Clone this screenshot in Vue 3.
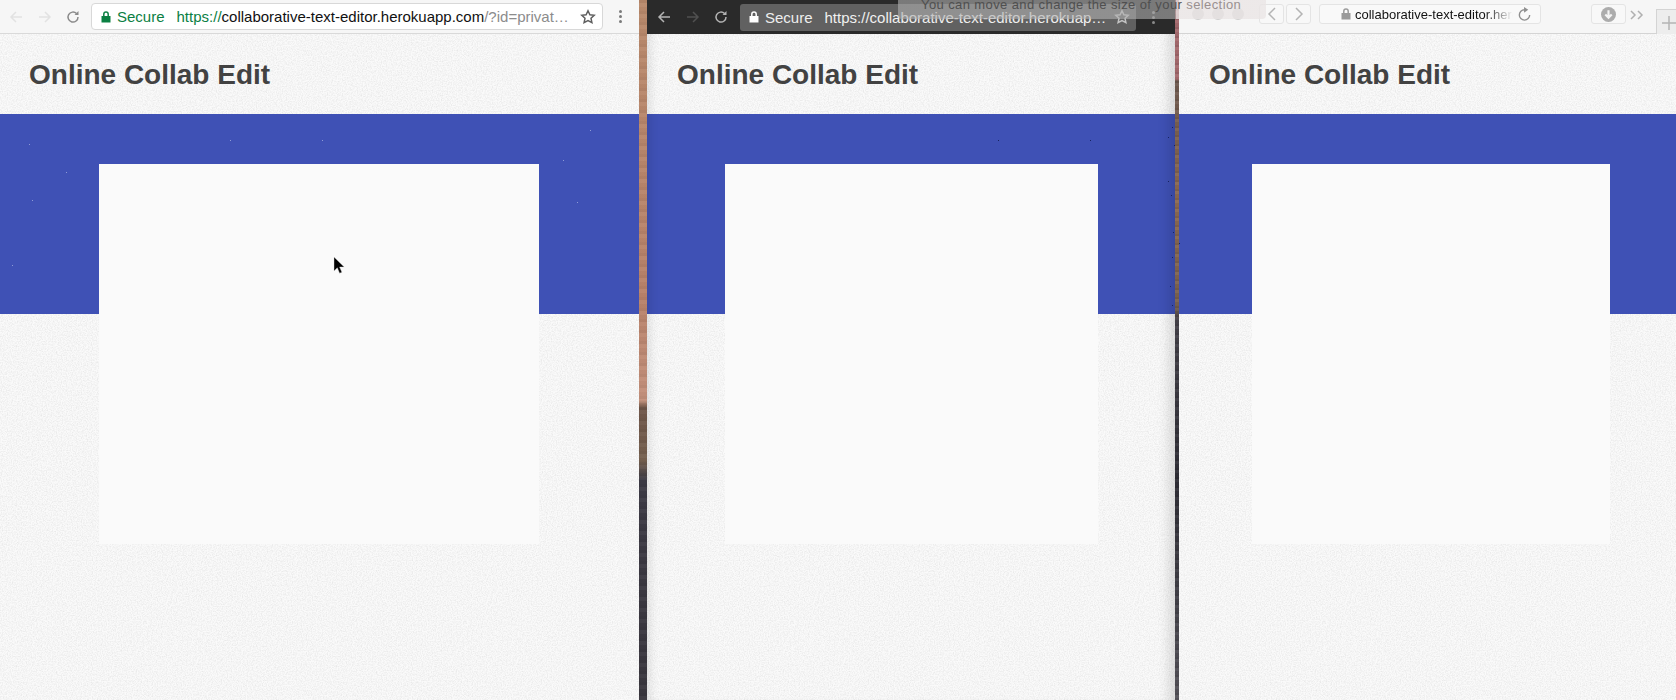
<template>
  <div class="screen">
    <!-- ventana 1: chrome claro -->
    <section class="win win-one">
      <header class="bar bar-light">
        <div class="nav">
          <svg width="16" height="16" viewBox="0 0 16 16" class="dim"><path d="M14 8H3M8 3L3 8l5 5" /></svg>
          <svg width="16" height="16" viewBox="0 0 16 16" class="dim"><path d="M2 8h11M8 3l5 5-5 5" /></svg>
          <svg width="16" height="16" viewBox="0 0 16 16" class="reload"><path d="M13 8a5 5 0 1 1-1.500-3.500" /><path class="solid" d="M13.500 2v4h-4z" /></svg>
        </div>
        <div class="url url-light">
          <svg width="10" height="12" viewBox="0 0 10 12" class="lock green"><path class="solid" d="M0.500 5h9v6.500h-9z" /><path d="M2.800 5V3.300a2.200 2.200 0 0 1 4.400 0V5" /></svg>
          <span class="secure first">Secure</span>
          <span class="addr"><span class="secure">https://</span>collaborative-text-editor.herokuapp.com<span class="muted">/?id=privat…</span></span>
          <svg width="16" height="16" viewBox="0 0 16 16" class="star"><path d="M8 1.800l1.900 4 4.300.5-3.200 3 .9 4.300L8 11.500l-3.900 2.100.9-4.300-3.200-3 4.300-.5z" /></svg>
        </div>
        <div class="dots"><i></i><i></i><i></i></div>
      </header>
      <PageBody />
    </section>

    <div class="strip strip-a"></div>

    <!-- ventana 2: chrome oscuro -->
    <section class="win win-two">
      <header class="bar bar-dark">
        <div class="nav">
          <svg width="16" height="16" viewBox="0 0 16 16" class="light"><path d="M14 8H3M8 3L3 8l5 5" /></svg>
          <svg width="16" height="16" viewBox="0 0 16 16" class="darkdim"><path d="M2 8h11M8 3l5 5-5 5" /></svg>
          <svg width="16" height="16" viewBox="0 0 16 16" class="light"><path d="M13 8a5 5 0 1 1-1.500-3.500" /><path class="solid" d="M13.500 2v4h-4z" /></svg>
        </div>
        <div class="url url-dark">
          <svg width="10" height="12" viewBox="0 0 10 12" class="lock white"><path class="solid" d="M0.500 5h9v6.500h-9z" /><path d="M2.800 5V3.300a2.200 2.200 0 0 1 4.400 0V5" /></svg>
          <span class="secure-dark">Secure</span>
          <span class="addr addr-dark">https://collaborative-text-editor.herokuap…</span>
          <svg width="16" height="16" viewBox="0 0 16 16" class="star star-dark"><path d="M8 1.800l1.900 4 4.300.5-3.200 3 .9 4.300L8 11.500l-3.900 2.100.9-4.300-3.200-3 4.300-.5z" /></svg>
        </div>
        <div class="dots dots-dark"><i></i><i></i><i></i></div>
      </header>
      <PageBody />
    </section>

    <div class="strip strip-b"></div>

    <!-- ventana 3: safari -->
    <section class="win win-three">
      <header class="bar bar-safari">
        <div class="lights"><i></i><i></i><i></i></div>
        <div class="saf-btns">
          <span class="saf-btn"><svg width="10" height="14" viewBox="0 0 10 14" class="saf-ico"><path d="M8 1L2 7l6 6" /></svg></span>
          <span class="saf-btn"><svg width="10" height="14" viewBox="0 0 10 14" class="saf-ico"><path d="M2 1l6 6-6 6" /></svg></span>
        </div>
        <div class="saf-url">
          <svg width="10" height="12" viewBox="0 0 10 12" class="lock gray"><path class="solid" d="M0.500 5h9v6.500h-9z" /><path d="M2.800 5V3.300a2.200 2.200 0 0 1 4.400 0V5" /></svg>
          <span class="saf-text">collaborative-text-editor.herokuapp.com</span>
          <svg width="15" height="15" viewBox="0 0 16 16" class="saf-reload"><path d="M13.500 8.500a5.500 5.500 0 1 1-5.500-5.500" /><path class="solid" d="M7.500 0l4.500 3-4.500 3z" /></svg>
        </div>
        <span class="saf-btn saf-down">
          <svg width="15" height="15" viewBox="0 0 14 14"><circle cx="7" cy="7" r="7" fill="#acacac" /><path class="arrow" d="M7 3v7M4 7l3 3 3-3" /></svg>
        </span>
        <svg width="14" height="10" viewBox="0 0 14 10" class="more"><path d="M1 1l4 4-4 4M8 1l4 4-4 4" /></svg>
        <div class="tab-plus">
          <svg width="14" height="14" viewBox="0 0 14 14" class="saf-ico"><path d="M7 0v14M0 7h14" /></svg>
        </div>
      </header>
      <PageBody />
    </section>

    <!-- aviso de la herramienta de captura -->
    <div class="hint">You can move and change the size of your <span class="hint-light">selection</span></div>

    <!-- motas del gif y cursor -->
    <svg class="overlay" width="1676" height="700" viewBox="0 0 1676 700">
      <rect v-for="s in specks" :key="s.x + '-' + s.y" :x="s.x" :y="s.y" width="1" height="1" :fill="s.c" />
      <path d="M334 257v14l3.300-3.200 2.300 5.400 2.300-1-2.300-5.200h4.600z" fill="#000" stroke="#d8d8d8" stroke-width=".4" />
    </svg>
  </div>
</template>

<script setup>
import { h } from 'vue'

const NOISE_ID = 'page-noise'

// las tres ventanas muestran la misma pagina
const PageBody = () =>
  h('div', { class: 'page' }, [
    h('svg', { class: 'grain', width: '100%', height: '100%' }, [
      h('filter', { id: NOISE_ID, 'color-interpolation-filters': 'sRGB' }, [
        h('feTurbulence', { type: 'fractalNoise', baseFrequency: '0.8', numOctaves: '2', seed: '4' }),
        h('feColorMatrix', { values: '0 0 0 0 0  0 0 0 0 0  0 0 0 0 0  0.14 0 0 0 -0.05' }),
      ]),
      h('rect', { width: '100%', height: '100%', filter: `url(#${NOISE_ID})` }),
    ]),
    h('div', { class: 'title-row' }, h('h1', { class: 'title' }, 'Online Collab Edit')),
    h('div', { class: 'stage' }, h('div', { class: 'card' })),
  ])

const lightSpeck = '#8f9bd6'
const darkSpeck = '#16225f'
const specks = [
  { x: 29, y: 144, c: lightSpeck },
  { x: 66, y: 172, c: lightSpeck },
  { x: 230, y: 140, c: lightSpeck },
  { x: 322, y: 140, c: lightSpeck },
  { x: 32, y: 200, c: lightSpeck },
  { x: 12, y: 265, c: lightSpeck },
  { x: 590, y: 130, c: lightSpeck },
  { x: 563, y: 160, c: lightSpeck },
  { x: 577, y: 202, c: lightSpeck },
  { x: 998, y: 140, c: darkSpeck },
  { x: 1090, y: 140, c: darkSpeck },
  { x: 1172, y: 127, c: darkSpeck },
  { x: 1168, y: 137, c: darkSpeck },
  { x: 1174, y: 145, c: darkSpeck },
  { x: 1168, y: 181, c: darkSpeck },
  { x: 1171, y: 195, c: darkSpeck },
  { x: 1173, y: 232, c: darkSpeck },
  { x: 1179, y: 243, c: darkSpeck },
  { x: 1172, y: 257, c: darkSpeck },
  { x: 1170, y: 286, c: darkSpeck },
  { x: 1172, y: 305, c: darkSpeck },
]
</script>

<style>
.page {
  position: relative;
  flex: 1;
  display: flex;
  flex-direction: column;
  background: #fafafa;
}

.grain {
  position: absolute;
  top: 0;
  left: 0;
}

.title-row {
  position: relative;
  height: 80px;
  display: flex;
  align-items: center;
  padding-left: var(--title-left);
  padding-top: 2px;
  box-sizing: border-box;
}

.title {
  margin: 0;
  font-family: "Liberation Sans", Arial, sans-serif;
  font-weight: 700;
  font-size: 28px;
  line-height: 1;
  color: #424242;
}

.stage {
  position: relative;
  flex: 1;
  padding-top: 50px;
  padding-left: var(--card-left);
  background: linear-gradient(#3f51b5 200px, transparent 200px);
}

.card {
  width: var(--card-width);
  height: 380px;
  background: #fafafa;
}
</style>

<style scoped>
.screen {
  position: relative;
  display: flex;
  width: 1676px;
  height: 700px;
  overflow: hidden;
  font-family: "Liberation Sans", Arial, sans-serif;
}

.win {
  position: relative;
  display: flex;
  flex-direction: column;
  flex: none;
  box-sizing: border-box;
}

.win-one {
  width: 639px;
  --title-left: 29px;
  --card-left: 99px;
  --card-width: 440px;
}

.win-two {
  width: 528px;
  --title-left: 30px;
  --card-left: 78px;
  --card-width: 373px;
}

/* sombra de la ventana sobre la pagina */
.win-two::after {
  content: "";
  position: absolute;
  top: 34px;
  left: 0;
  right: 0;
  bottom: 0;
  pointer-events: none;
  box-shadow: inset 10px 0 9px -6px rgba(0, 0, 0, 0.09), inset -14px 0 12px -8px rgba(0, 0, 0, 0.13);
}

.win-three {
  flex: 1;
  min-width: 0;
  --title-left: 30px;
  --card-left: 73px;
  --card-width: 358px;
}

.strip {
  flex: none;
}

.strip-a {
  width: 8px;
  background:
    repeating-linear-gradient(rgba(0, 0, 0, 0.05) 0 3px, rgba(255, 255, 255, 0.03) 3px 7px, rgba(0, 0, 0, 0.02) 7px 11px),
    linear-gradient(#b98a6c 0, #b8826a 300px, #c4917c 400px, #6e5548 408px, #75604f 460px, #3c3a44 480px, #3a373e 700px);
}

.strip-b {
  width: 4px;
  background:
    repeating-linear-gradient(rgba(0, 0, 0, 0.1) 0 2px, rgba(255, 255, 255, 0.04) 2px 5px, rgba(0, 0, 0, 0.04) 5px 9px),
    linear-gradient(#a56a6e 0, #a56a6e 79px, #6e5a50 81px, #8d6a52 200px, #7a6250 305px, #45424a 320px, #2f2e36 480px, #55535a 700px);
}

.bar {
  height: 34px;
  flex: none;
  display: flex;
  align-items: center;
  box-sizing: border-box;
}

.bar svg path {
  fill: none;
  stroke: currentColor;
  stroke-width: 1.5;
}

.bar svg path.solid {
  fill: currentColor;
  stroke: none;
}

.bar svg path.arrow {
  stroke: #f4f4f4;
  stroke-width: 2;
}

.bar-light {
  background: #f6f6f6;
  border-bottom: 1px solid #d9d9d9;
  padding: 0 17px 0 8px;
}

.bar-dark {
  background: #2a2a2a;
  padding-left: 9px;
  padding-right: 20px;
}

.bar-safari {
  position: relative;
  align-items: flex-start;
  padding-top: 4px;
  background: #f6f6f6;
  border-bottom: 1px solid #d4d4d4;
  padding-left: 80px;
}

.nav {
  display: flex;
  gap: 12.5px;
  align-items: center;
  margin-right: 10px;
}

.bar-dark .nav {
  margin-right: 11px;
}

.dim { color: #e2e2e2; }
.reload { color: #8a8a8a; }
.light { color: #b4b4b4; }
.darkdim { color: #505050; }

.url {
  flex: 1;
  height: 27px;
  display: flex;
  align-items: center;
  box-sizing: border-box;
  border-radius: 4px;
  font-size: 15px;
  white-space: nowrap;
  padding: 0 6px 0 9px;
}

.url-light {
  background: #fff;
  border: 1px solid #d8d8d8;
}

.url-dark {
  background: #616161;
  border-radius: 3px;
}

.lock {
  flex: none;
}

.green { color: #0b8043; }
.white { color: #fff; }
.gray { color: #9a9a9a; }

.secure {
  color: #0b8043;
}

.secure.first {
  margin-left: 6px;
}

.addr {
  flex: 1;
  margin-left: 12px;
  color: #111;
  overflow: hidden;
}

.muted {
  color: #8c8c8c;
}

.secure-dark {
  margin-left: 6px;
  color: #eee;
}

.addr-dark {
  color: #f0f0f0;
}

.star { color: #5f5f5f; flex: none; }
.star-dark { color: #c4c4c4; }

.dots {
  display: flex;
  flex-direction: column;
  gap: 2px;
  margin-left: 16px;
}

.dots i {
  width: 3px;
  height: 3px;
  border-radius: 50%;
  background: #7a7a7a;
}

.dots-dark i {
  background: #8a8a8a;
}

/* semaforos de safari, casi tapados por el aviso */
.lights {
  display: flex;
  gap: 8px;
  position: absolute;
  left: 13px;
  top: 8px;
}

.lights i {
  width: 12px;
  height: 12px;
  border-radius: 50%;
  background: #cfcfcf;
}

.saf-btns {
  display: flex;
  gap: 2px;
}

.saf-btn {
  width: 25px;
  height: 20px;
  display: flex;
  align-items: center;
  justify-content: center;
  border: 1px solid #e4e4e4;
  border-radius: 3px;
  box-sizing: border-box;
  background: #f8f8f8;
}

.saf-ico {
  color: #b4b4b4;
}

.saf-reload {
  flex: none;
  color: #8f8f8f;
}

.saf-url {
  width: 225px;
  height: 20px;
  margin-left: 8px;
  display: flex;
  align-items: center;
  gap: 4px;
  box-sizing: border-box;
  padding: 0 8px 0 21px;
  border: 1px solid #e4e4e4;
  border-radius: 3px;
  background: #f9f9f9;
  overflow: hidden;
}

.saf-text {
  flex: 1;
  font-size: 13px;
  color: #111;
  white-space: nowrap;
  overflow: hidden;
  -webkit-mask-image: linear-gradient(90deg, #000 82%, transparent 100%);
  mask-image: linear-gradient(90deg, #000 82%, transparent 100%);
}

.saf-down {
  width: 36px;
  margin-left: 50px;
}

.more {
  margin: 6px 0 0 4px;
  flex: none;
  color: #b0b0b0;
}

.tab-plus {
  flex: 1;
  height: 25px;
  margin: 5px 0 0 12px;
  padding: 6px 0 0 5px;
  box-sizing: border-box;
  background: #ededed;
  border: 1px solid #d4d4d4;
  border-width: 1px 0 0 1px;
}

.hint {
  position: absolute;
  left: 898px;
  top: 0;
  width: 368px;
  height: 19px;
  box-sizing: border-box;
  padding-left: 23px;
  border-radius: 0 0 4px 4px;
  background: linear-gradient(90deg, rgba(175, 175, 175, 0.6) 278px, rgba(234, 229, 229, 0.78) 278px);
  font-size: 13px;
  letter-spacing: 0.4px;
  line-height: 9px;
  color: #4f4f4f;
  white-space: nowrap;
}

.hint-light {
  color: #9a9090;
}

.overlay {
  position: absolute;
  top: 0;
  left: 0;
  pointer-events: none;
}
</style>
